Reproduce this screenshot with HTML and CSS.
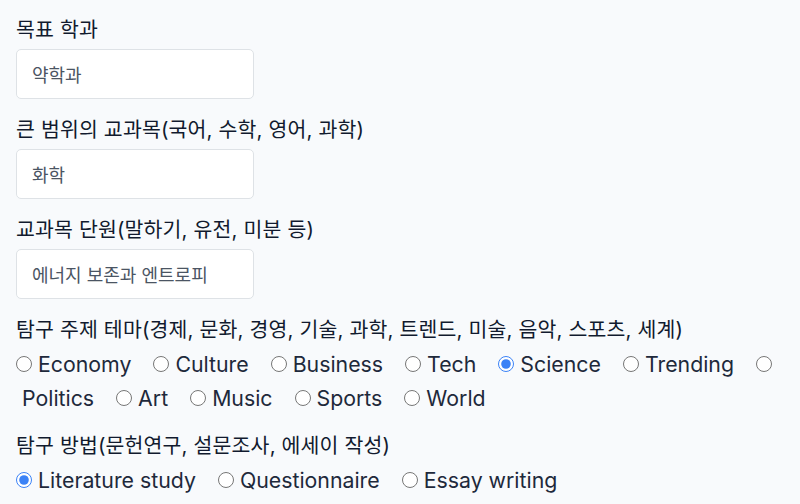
FILE: index.html
```html
<!DOCTYPE html>
<html lang="ko">
<head>
<meta charset="utf-8">
<title>탐구 설정</title>
<link rel="stylesheet" href="styles.css">
</head>
<body>
<main class="page">
  <div class="group">
    <label class="field-label" for="major">목표 학과</label>
    <input class="text-input" id="major" type="text" value="약학과">
  </div>
  <div class="group">
    <label class="field-label" for="subject">큰 범위의 교과목(국어, 수학, 영어, 과학)</label>
    <input class="text-input" id="subject" type="text" value="화학">
  </div>
  <div class="group">
    <label class="field-label" for="unit">교과목 단원(말하기, 유전, 미분 등)</label>
    <input class="text-input" id="unit" type="text" value="에너지 보존과 엔트로피">
  </div>
  <div class="group">
    <div class="field-label">탐구 주제 테마(경제, 문화, 경영, 기술, 과학, 트렌드, 미술, 음악, 스포츠, 세계)</div>
    <div class="options">
      <label class="opt"><input type="radio" name="theme"><span>Economy</span></label>
      <label class="opt"><input type="radio" name="theme"><span>Culture</span></label>
      <label class="opt"><input type="radio" name="theme"><span>Business</span></label>
      <label class="opt"><input type="radio" name="theme"><span>Tech</span></label>
      <label class="opt"><input type="radio" name="theme" checked><span>Science</span></label>
      <label class="opt"><input type="radio" name="theme"><span>Trending</span></label>
      <label class="opt"><input type="radio" name="theme"><span>Politics</span></label>
      <label class="opt"><input type="radio" name="theme"><span>Art</span></label>
      <label class="opt"><input type="radio" name="theme"><span>Music</span></label>
      <label class="opt"><input type="radio" name="theme"><span>Sports</span></label>
      <label class="opt"><input type="radio" name="theme"><span>World</span></label>
    </div>
  </div>
  <div class="group">
    <div class="field-label">탐구 방법(문헌연구, 설문조사, 에세이 작성)</div>
    <div class="options">
      <label class="opt"><input type="radio" name="method" checked><span>Literature study</span></label>
      <label class="opt"><input type="radio" name="method"><span>Questionnaire</span></label>
      <label class="opt"><input type="radio" name="method"><span>Essay writing</span></label>
    </div>
  </div>
</main>
</body>
</html>
```

FILE: styles.css
```css
html, body {
  margin: 0;
  padding: 0;
  background: #f8fafc;
}

body {
  font-family: "Inter", "Noto Sans CJK KR", sans-serif;
  color: #1e293b;
}

.page {
  padding: 16px 16px 0 16px;
}

.group {
  margin-bottom: 17px;
}

.field-label {
  display: block;
  font-size: 20.5px;
  line-height: 28px;
  font-weight: 400;
  letter-spacing: 0.15px;
  color: #111a2e;
  margin-bottom: 5px;
}

.text-input {
  display: block;
  box-sizing: border-box;
  width: 238px;
  height: 50px;
  margin: 0;
  padding: 0 15px;
  border: 1px solid #dee2e6;
  border-radius: 5px;
  background: #ffffff;
  font-family: "Inter", "Noto Sans CJK KR", sans-serif;
  font-size: 18px;
  color: #4b5563;
  outline: none;
}

.options {
  margin-top: -2px;
  font-size: 21.3px;
  line-height: 34px;
  color: #1e293b;
}

.opt {
  margin-right: 16px;
}

.opt input {
  width: 16px;
  height: 16px;
  margin: 0;
  vertical-align: baseline;
  accent-color: #3b82f6;
}

.opt span {
  margin-left: 6px;
}
```
